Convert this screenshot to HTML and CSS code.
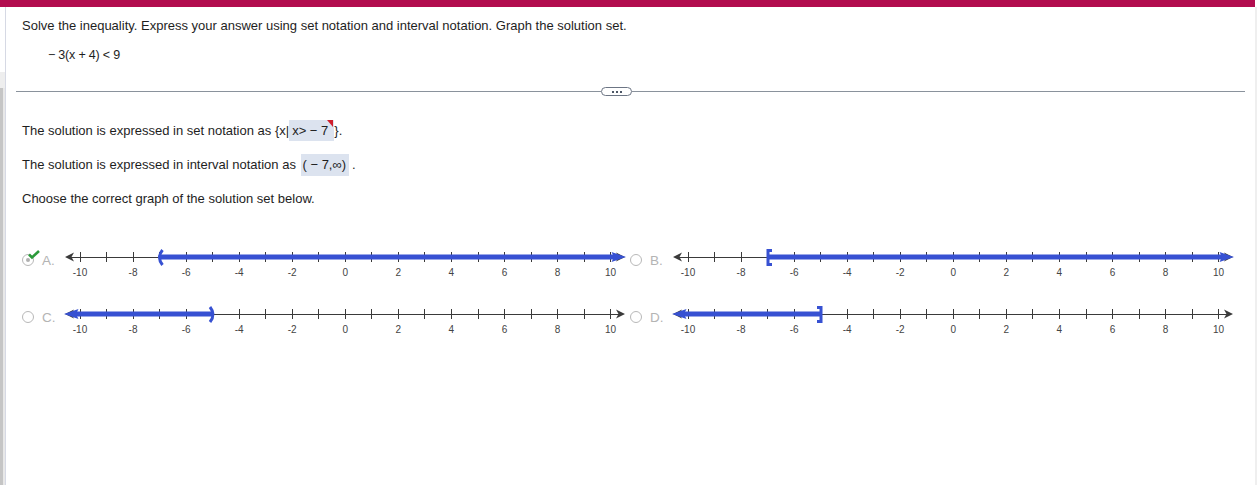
FILE: index.html
```html
<!DOCTYPE html>
<html>
<head>
<meta charset="utf-8">
<link rel="stylesheet" href="styles.css">
</head>
<body>
<div class="topbar"></div>
<div class="frame">
  <div class="gutter">
    <div class="g-top"></div>
    <div class="g-mid"></div>
    <div class="g-bot"></div>
  </div>
  <div class="main">
    <div class="prompt">Solve the inequality. Express your answer using set notation and interval notation. Graph the solution set.</div>
    <div class="equation">− 3(x + 4) &lt; 9</div>
    <div class="divider">
      <div class="rule rule-left"></div>
      <div class="pill"><span></span><span></span><span></span></div>
      <div class="rule rule-right"></div>
    </div>
    <div class="para">The solution is expressed in set notation as {x|<span class="ans ans-set">x&gt; − 7<i class="flag"></i></span>}.</div>
    <div class="para">The solution is expressed in interval notation as <span class="ans ans-int">( − 7,∞)</span><span class="dot">.</span></div>
    <div class="para">Choose the correct graph of the solution set below.</div>

    <svg class="defs" width="0" height="0">
      <defs>
        <symbol id="base" viewBox="0 0 570 36">
          <g class="ticks">
            <line x1="8" y1="12" x2="560" y2="12"/>
            <line x1="18" y1="7" x2="18" y2="17"/>
            <line x1="44.5" y1="7" x2="44.5" y2="17"/>
            <line x1="71" y1="7" x2="71" y2="17"/>
            <line x1="97.6" y1="7" x2="97.6" y2="17"/>
            <line x1="124.1" y1="7" x2="124.1" y2="17"/>
            <line x1="150.6" y1="7" x2="150.6" y2="17"/>
            <line x1="177.2" y1="7" x2="177.2" y2="17"/>
            <line x1="203.7" y1="7" x2="203.7" y2="17"/>
            <line x1="230.2" y1="7" x2="230.2" y2="17"/>
            <line x1="256.8" y1="7" x2="256.8" y2="17"/>
            <line x1="283.3" y1="7" x2="283.3" y2="17"/>
            <line x1="309.8" y1="7" x2="309.8" y2="17"/>
            <line x1="336.4" y1="7" x2="336.4" y2="17"/>
            <line x1="362.9" y1="7" x2="362.9" y2="17"/>
            <line x1="389.4" y1="7" x2="389.4" y2="17"/>
            <line x1="416" y1="7" x2="416" y2="17"/>
            <line x1="442.5" y1="7" x2="442.5" y2="17"/>
            <line x1="469" y1="7" x2="469" y2="17"/>
            <line x1="495.5" y1="7" x2="495.5" y2="17"/>
            <line x1="522.1" y1="7" x2="522.1" y2="17"/>
            <line x1="548.6" y1="7" x2="548.6" y2="17"/>
          </g>
          <path class="black-arrow" d="M3 12 L12 7.5 L9.5 12 L12 16.5 Z"/>
          <path class="black-arrow" d="M563 12 L554 7.5 L556.5 12 L554 16.5 Z"/>
          <g class="labels">
            <text x="18" y="31">-10</text>
            <text x="71" y="31">-8</text>
            <text x="124.1" y="31">-6</text>
            <text x="177.2" y="31">-4</text>
            <text x="230.2" y="31">-2</text>
            <text x="283.3" y="31">0</text>
            <text x="336.4" y="31">2</text>
            <text x="389.4" y="31">4</text>
            <text x="442.5" y="31">6</text>
            <text x="495.5" y="31">8</text>
            <text x="548.6" y="31">10</text>
          </g>
        </symbol>
      </defs>
    </svg>

    <div class="options">
      <div class="option">
        <span class="radio checked"></span>
        <svg class="check" width="14" height="10" viewBox="0 0 14 10"><path d="M1 4.5 L4 7.5 L11 1" /></svg>
        <span class="letter">A.</span>
        <svg class="nl" width="570" height="36" viewBox="0 0 570 36">
          <use href="#base" width="570" height="36"/>
          <g class="blue">
            <rect x="97.6" y="9.5" width="455" height="5"/>
            <path d="M564 12 L549.5 7 L552 12 L549.5 17 Z"/>
            <path class="paren" d="M100.5 5 Q94.5 12.5 100.5 20"/>
          </g>
        </svg>
      </div>
      <div class="option">
        <span class="radio"></span>
        <span class="letter">B.</span>
        <svg class="nl" width="570" height="36" viewBox="0 0 570 36">
          <use href="#base" width="570" height="36"/>
          <g class="blue">
            <rect x="97.6" y="9.5" width="455" height="5"/>
            <path d="M564 12 L549.5 7 L552 12 L549.5 17 Z"/>
            <path class="paren" d="M102 5.5 L98 5.5 L98 19.5 L102 19.5"/>
          </g>
        </svg>
      </div>
      <div class="option">
        <span class="radio"></span>
        <span class="letter">C.</span>
        <svg class="nl" width="570" height="36" viewBox="0 0 570 36">
          <use href="#base" width="570" height="36"/>
          <g class="blue">
            <rect x="14" y="9.5" width="136.6" height="5"/>
            <path d="M2 12 L16.5 7 L14 12 L16.5 17 Z"/>
            <path class="paren" d="M148 5 Q154 12.5 148 20"/>
          </g>
        </svg>
      </div>
      <div class="option">
        <span class="radio"></span>
        <span class="letter">D.</span>
        <svg class="nl" width="570" height="36" viewBox="0 0 570 36">
          <use href="#base" width="570" height="36"/>
          <g class="blue">
            <rect x="14" y="9.5" width="136.6" height="5"/>
            <path d="M2 12 L16.5 7 L14 12 L16.5 17 Z"/>
            <path class="paren" d="M147 5.5 L151 5.5 L151 19.5 L147 19.5"/>
          </g>
        </svg>
      </div>
    </div>
  </div>
  <div class="rstrip"></div>
</div>
</body>
</html>
```

FILE: styles.css
```css
html, body {
  margin: 0;
  padding: 0;
  background: #ffffff;
}

body {
  font-family: "Liberation Sans", Arial, sans-serif;
  font-size: 13px;
  color: #1e1e1e;
  height: 100vh;
  overflow: hidden;
  display: flex;
  flex-direction: column;
}

.topbar {
  height: 7px;
  background: #b20c4e;
  margin-right: 2px;
  flex: none;
}

.frame {
  flex: 1;
  display: flex;
  min-height: 0;
}

.gutter {
  width: 5px;
  border-right: 1px solid #d6d9e4;
  display: flex;
  flex-direction: column;
  flex: none;
}

.g-top {
  height: 65px;
  background: #ffffff;
}

.g-mid {
  height: 16px;
  background: #eeeeee;
}

.g-bot {
  flex: 1;
  background: #e8e8e8;
  border-left: 3px solid #c5c5c5;
}

.rstrip {
  width: 2px;
  background: #efefef;
  flex: none;
}

.main {
  flex: 1;
  padding: 11px 10px 0 10px;
}

.prompt {
  line-height: 16px;
  padding-left: 6px;
}

.equation {
  line-height: 16px;
  padding-left: 32px;
  margin-top: 13px;
  font-size: 12.5px;
  letter-spacing: -0.2px;
}

.divider {
  display: flex;
  align-items: center;
  height: 9px;
  margin-top: 24px;
}

.rule {
  height: 1px;
  background: #8a929c;
}

.rule-left {
  width: 585px;
}

.rule-right {
  flex: 1;
}

.pill {
  width: 29px;
  height: 7px;
  border: 1px solid #6c7584;
  border-radius: 5px;
  background: #ffffff;
  display: flex;
  align-items: center;
  justify-content: center;
  gap: 2px;
}

.pill span {
  width: 2px;
  height: 2px;
  background: #4d5766;
}

.para {
  height: 22px;
  line-height: 22px;
  padding-left: 6px;
  margin-top: 12px;
  white-space: nowrap;
}

.divider + .para {
  margin-top: 24px;
}

.ans {
  display: inline-block;
  background: #dce3ef;
  height: 21px;
  line-height: 21px;
  vertical-align: top;
}

.ans-set {
  padding: 0 6px 0 3px;
  position: relative;
}

.ans-int {
  padding: 0 3px 0 2px;
  height: 22px;
  line-height: 22px;
  margin-left: 1px;
}

.dot {
  margin-left: 3px;
}

.flag {
  position: absolute;
  top: 0;
  right: 1px;
  width: 0;
  height: 0;
  border-top: 7px solid #cf1f2c;
  border-left: 6px solid transparent;
}

.defs {
  display: block;
  width: 0;
  height: 0;
  overflow: hidden;
}

.options {
  display: grid;
  grid-template-columns: 608px 608px;
  row-gap: 21px;
  margin-top: 35px;
  margin-left: 6px;
}

.option {
  display: flex;
  align-items: flex-start;
  height: 36px;
  position: relative;
}

.radio {
  width: 10px;
  height: 10px;
  border: 1px solid #b8b8b8;
  border-radius: 50%;
  margin-top: 9px;
  flex: none;
  box-sizing: content-box;
  display: flex;
  align-items: center;
  justify-content: center;
  background: #ffffff;
}

.radio.checked::after {
  content: "";
  width: 4px;
  height: 4px;
  border-radius: 50%;
  background: #b0b0b0;
}

.check {
  position: absolute;
  left: 6px;
  top: 5px;
}

.check path {
  fill: none;
  stroke: #2c9a3a;
  stroke-width: 2.6;
}

.letter {
  width: 20px;
  margin-left: 8px;
  margin-top: 8px;
  line-height: 16px;
  font-size: 13.5px;
  color: #b4b4b4;
  flex: none;
}

.nl {
  display: block;
  flex: none;
}

.ticks line {
  stroke: #3a3a3a;
  stroke-width: 1;
  shape-rendering: crispEdges;
}

.black-arrow {
  fill: #3a3a3a;
}

.labels text {
  font-family: "Liberation Sans", Arial, sans-serif;
  font-size: 10px;
  fill: #444444;
  text-anchor: middle;
}

.blue rect,
.blue path {
  fill: #3751d2;
}

.blue .paren {
  fill: none;
  stroke: #3751d2;
  stroke-width: 3;
}
```
